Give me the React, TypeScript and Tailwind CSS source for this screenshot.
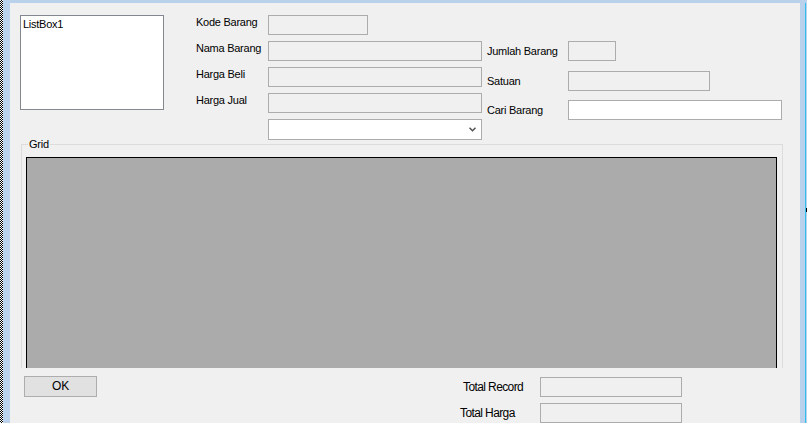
import React from "react";

function TextBox({ w, white = false, h = "h-5" }: { w: string; white?: boolean; h?: string }) {
  return (
    <div
      className={`${w} ${h} border border-[#acacac] ${white ? "bg-white" : "bg-[#f0f0f0]"}`}
    />
  );
}

function LeftRow({ label, w, className = "" }: { label: string; w: string; className?: string }) {
  return (
    <div className={`flex items-start ${className}`}>
      <div className="w-[72px] leading-[14px]">{label}</div>
      <TextBox w={w} />
    </div>
  );
}

function RightRow({ label, w, white = false, className = "" }: { label: string; w: string; white?: boolean; className?: string }) {
  return (
    <div className={`flex items-center ${className}`}>
      <div className="w-[81px]">{label}</div>
      <TextBox w={w} white={white} />
    </div>
  );
}

export default function App() {
  return (
    <div
      className="w-[807px] h-[423px] flex overflow-hidden text-[11px] tracking-[-0.25px] text-black"
      style={{ fontFamily: '"Liberation Sans", Arial, sans-serif' }}
    >
      {/* dotted edge */}
      <div className="w-[3px] h-full bg-[repeating-conic-gradient(#000_0_25%,#fff_0_50%)] bg-[length:2px_2px]" />

      <div className="flex-1 flex flex-col">
        <div className="h-[3px] bg-[#b9d1ea]" />
        <div className="flex flex-1">
          <div className="w-[7px] bg-[#b9d1ea]" />

          {/* form */}
          <div className="w-[790px] bg-[#f0f0f0] flex flex-col">
            <div className="flex items-start pt-[12px]">
              <div className="ml-[10px] w-[144px] h-[95px] bg-white border border-[#828790] pl-[2px] pt-[1px] leading-[14px]">
                ListBox1
              </div>

              <div className="ml-[32px] flex flex-col">
                <LeftRow label="Kode Barang" w="w-[100px]" />
                <LeftRow label="Nama Barang" w="w-[214px]" className="mt-[6px]" />
                <LeftRow label="Harga Beli" w="w-[214px]" className="mt-[6px]" />
                <LeftRow label="Harga Jual" w="w-[214px]" className="mt-[6px]" />
                <div className="ml-[72px] mt-[6px] w-[214px] h-[21px] bg-white border border-[#acacac] flex items-center justify-end pr-[5px]">
                  <svg width="7" height="5" viewBox="0 0 7 5">
                    <path d="M0.5 0.8 L3.5 3.8 L6.5 0.8" fill="none" stroke="#505050" strokeWidth="1.5" />
                  </svg>
                </div>
              </div>

              <div className="ml-[5px] mt-[26px] flex flex-col">
                <RightRow label="Jumlah Barang" w="w-[48px]" />
                <RightRow label="Satuan" w="w-[142px]" className="mt-[10px]" />
                <RightRow label="Cari Barang" w="w-[214px]" white className="mt-[9px]" />
              </div>
            </div>

            {/* group box */}
            <div className="relative ml-[11px] mt-[4px] w-[762px] h-[224px] border border-[#dcdcdc] border-b-0">
              <div className="absolute -top-[8px] left-[6px] bg-[#f0f0f0] px-[1px] leading-[14px]">Grid</div>
              <div className="ml-[4px] mt-[12px] w-[751px] h-[211px] bg-[#ababab] border-t border-x border-black" />
            </div>

            {/* bottom */}
            <div className="flex items-start">
              <button className="ml-[14px] mt-[8px] w-[73px] h-[21px] bg-[#e1e1e1] border border-[#adadad] text-[12px] leading-[19px]">
                OK
              </button>
              <div className="ml-[363px] mt-[9px] flex flex-col">
                <div className="flex items-center">
                  <div className="w-[80px] pl-[3px] text-[12px] tracking-[-0.6px]">Total Record</div>
                  <TextBox w="w-[142px]" />
                </div>
                <div className="flex items-center mt-[6px]">
                  <div className="w-[80px] text-[12px] tracking-[-0.6px]">Total Harga</div>
                  <TextBox w="w-[142px]" />
                </div>
              </div>
            </div>
          </div>

          {/* right frame */}
          <div className="flex">
            <div className="w-[5px] bg-[#b9d1ea]" />
            <div className="w-[1px] bg-[#2fc0f0]" />
            <div className="w-[1px] bg-[#b9d1ea] flex flex-col">
              <div className="h-[205px]" />
              <div className="h-[4px] bg-black" />
            </div>
          </div>
        </div>
      </div>
    </div>
  );
}
